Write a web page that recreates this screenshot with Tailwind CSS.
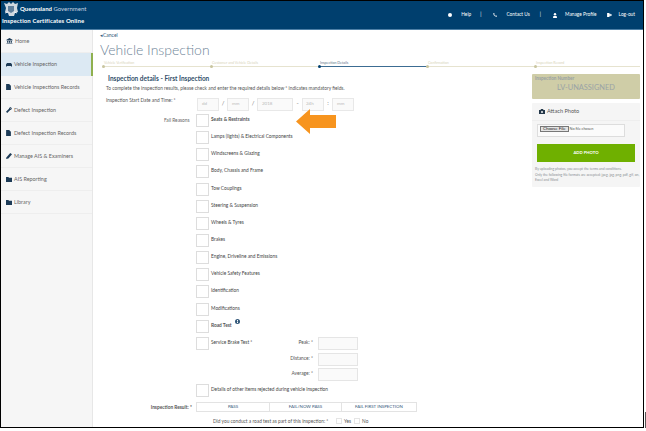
<!DOCTYPE html>
<html><head><meta charset="utf-8"><script src="https://cdn.jsdelivr.net/npm/@tailwindcss/browser@4"></script></head>
<body class="bg-white">
<div class="w-[646px] h-[431px] overflow-hidden relative font-['Lato','sans-serif'] text-[#555]">
 <div class="w-[644px] h-[428px] border-t border-l border-r border-b border-black flex flex-col overflow-hidden">
  <header class="h-[29px] shrink-0 bg-[#003f6e] border-b border-[#4d7fa6] flex items-stretch justify-between text-white pl-[1px] pr-[8px]">
   <div class="flex flex-col pt-[2px]">
    <div class="flex items-center gap-[2px] h-[12px] pl-[2px]">
     <svg width="14" height="14" viewBox="0 0 14 14"><path d="M0 1l3 1 2-2 2 2 2-2 2 2 3-1-1 5 1 4-3 1-1 3H5l-1-3-3-1 1-4z" fill="#cfd8e0"/><path d="M4 4h6v5l-3 2-3-2z" fill="#5f7f9c"/><path d="M1 11l3-1M13 11l-3-1" stroke="#fff" stroke-width=".8"/></svg>
     <span class="text-[6px] font-bold leading-none">Queensland <span class="font-normal text-[#c9d6e2]">Government</span></span>
    </div>
    <span class="text-[6px] font-bold leading-[6px] tracking-[0.1px] mt-[3px]">Inspection Certificates Online</span>
   </div>
   <nav class="flex items-center text-[4.8px] h-full">
    <svg class="w-[4px] h-[4px] mr-[9px]" viewBox="0 0 10 10"><circle cx="5" cy="5" r="5" fill="#fff"/></svg><span class="mr-[9px]">Help</span><span class="mr-[12px]">|</span>
    <svg class="w-[4px] h-[4px] mr-[9px]" viewBox="0 0 10 10"><path d="M1 0l2 0 1 3-1 1c1 2 2 3 3 3l1-1 3 1v2c-6 1-10-4-9-9z" fill="#fff"/></svg><span class="mr-[10px]">Contact Us</span><span class="mr-[12px]">|</span>
    <svg class="w-[4px] h-[5px] mr-[8px]" viewBox="0 0 10 12"><circle cx="5" cy="3" r="3" fill="#fff"/><path d="M0 12l1-5h8l1 5z" fill="#fff"/></svg><span class="mr-[10px]">Manage Profile</span>
    <svg class="w-[5px] h-[4px] mr-[7px]" viewBox="0 0 12 10"><path d="M0 0h6v10H0zM6 3h3V1l3 4-3 4V7H6z" fill="#fff"/></svg><span>Log-out</span>
   </nav>
  </header>
  <div class="flex flex-1 min-h-0">
   <aside class="w-[92px] shrink-0 bg-[#f6f6f6] border-r border-[#e7e7e7] text-[5.4px] text-[#666]">
    <div class="h-[23px] flex items-center pl-[5px] gap-[2px] border-b border-[#eee]"><svg class="w-[7px] h-[6px]" viewBox="0 0 10 10"><path d="M0 3l5-3 5 3v1H0zM1 5h2v3H1zM4 5h2v3H4zM7 5h2v3H7zM0 9h10v1H0z" fill="#1d3b57"/></svg>Home</div>
    <div class="h-[23px] flex items-center pl-[5px] gap-[2px] bg-[#dce9f3] border-r-[2px] border-[#8fb04f] mr-[-1px]"><svg class="w-[6px] h-[5px]" viewBox="0 0 12 8"><path d="M0 4l2-3h8l2 3v4h-2V7H2v1H0z" fill="#1d3b57"/></svg>Vehicle Inspection</div>
    <div class="h-[23px] flex items-center pl-[5px] gap-[3px] border-b border-[#eee]"><svg class="w-[5px] h-[6px]" viewBox="0 0 8 10"><path d="M0 0h5l3 3v7H0z" fill="#1d3b57"/></svg>Vehicle Inspections Records</div>
    <div class="h-[23px] flex items-center pl-[5px] gap-[2px] border-b border-[#eee]"><svg class="w-[6px] h-[6px]" viewBox="0 0 10 10"><path d="M0 8l5-5c0-2 2-3 4-3L7 2l1 1 2-2c0 2-1 4-3 4l-5 5z" fill="#1d3b57"/></svg>Defect Inspection</div>
    <div class="h-[23px] flex items-center pl-[5px] gap-[3px] border-b border-[#eee]"><svg class="w-[5px] h-[6px]" viewBox="0 0 8 10"><path d="M0 0h5l3 3v7H0z" fill="#1d3b57"/></svg>Defect Inspection Records</div>
    <div class="h-[23px] flex items-center pl-[5px] gap-[2px] border-b border-[#eee]"><svg class="w-[6px] h-[6px]" viewBox="0 0 10 10"><path d="M0 10l1-3 6-7 3 2-6 7z" fill="#1d3b57"/></svg>Manage AIS &amp; Examiners</div>
    <div class="h-[23px] flex items-center pl-[5px] gap-[2px] border-b border-[#eee]"><svg class="w-[6px] h-[5px]" viewBox="0 0 10 8"><path d="M0 0h4l1 1h5v7H0z" fill="#1d3b57"/></svg>AIS Reporting</div>
    <div class="h-[23px] flex items-center pl-[5px] gap-[2px] border-b border-[#eee]"><svg class="w-[6px] h-[5px]" viewBox="0 0 10 8"><path d="M0 0h4l1 1h5v7H0z" fill="#1d3b57"/></svg>Library</div>
   </aside>
   <main class="flex-1 min-w-0 pl-[7px] relative">
    <div class="text-[5px] text-[#33587a] leading-[5px] mt-[3px]">◂Cancel</div>
    <h1 class="text-[14px] leading-[20px] font-light text-[#6f8598] mt-[2px]">Vehicle Inspection</h1>
    <div class="relative h-[11px] mr-[3px] grid grid-cols-[108px_108px_108px_108px_1fr] text-[3.6px] text-[#d8d4ba] ml-[3px]">
     <div class="relative"><span class="absolute left-[1px] top-0">Vehicle Verification</span><div class="absolute left-0 right-0 top-[6px] h-[1px] bg-[#e6e3cf]"></div><div class="absolute left-[-1px] top-[5px] w-[3px] h-[3px] rounded-full bg-[#c9c59f]"></div></div>
     <div class="relative"><span class="absolute left-[1px] top-0">Customer and Vehicle Details</span><div class="absolute left-0 right-0 top-[6px] h-[1px] bg-[#e6e3cf]"></div><div class="absolute left-[-1px] top-[5px] w-[3px] h-[3px] rounded-full bg-[#c9c59f]"></div></div>
     <div class="relative text-[#5d7489]"><span class="absolute left-[1px] top-0">Inspection Details</span><div class="absolute left-0 right-0 top-[6px] h-[1px] bg-[#3c6c92]"></div><div class="absolute left-[-1px] top-[5px] w-[3px] h-[3px] rounded-full bg-[#003f6e]"></div></div>
     <div class="relative"><span class="absolute left-[1px] top-0">Confirmation</span><div class="absolute left-0 right-0 top-[6px] h-[1px] bg-[#e6e3cf]"></div><div class="absolute left-[-1px] top-[5px] w-[3px] h-[3px] rounded-full bg-[#c9c59f]"></div></div>
     <div class="relative"><span class="absolute left-[1px] top-0">Inspection Record</span><div class="absolute left-0 right-0 top-[6px] h-[1px] bg-[#e6e3cf]"></div><div class="absolute left-[-1px] top-[5px] w-[3px] h-[3px] rounded-full bg-[#c9c59f]"></div></div>
    </div>
    <div class="flex">
     <section class="w-[432px] shrink-0">
      <h2 class="text-[6.5px] leading-[9px] font-bold text-[#33506b] ml-[8px] mt-[3px]">Inspection details - First Inspection</h2>
      <p class="text-[4.8px] leading-[6px] mt-[2px] ml-[6px] text-[#555] whitespace-nowrap">To complete the inspection results, please check and enter the required details below * indicates mandatory fields.</p>
      <div class="flex mt-[7px] ml-[6px] text-[4.8px] h-[16px]">
       <span class="w-[91px] shrink-0 leading-[5px] text-[#555]">Inspection Start Date and Time: *</span>
       <div class="flex items-start text-[#bbb] text-[4.5px]">
        <span class="w-[22px] h-[13px] border border-[#e8e8e8] bg-[#fafafa] flex items-center pl-[4px]">dd</span><span class="w-[8px] text-center text-[#777] text-[6px] leading-[10px]">/</span>
        <span class="w-[22px] h-[13px] border border-[#e8e8e8] bg-[#fafafa] flex items-center pl-[4px]">mm</span><span class="w-[8px] text-center text-[#777] text-[6px] leading-[10px]">/</span>
        <span class="w-[36px] h-[13px] border border-[#e8e8e8] bg-[#fafafa] flex items-center pl-[4px]">2018</span><span class="w-[9px] text-center text-[#777] text-[6px] leading-[10px]">-</span>
        <span class="w-[22px] h-[13px] border border-[#e8e8e8] bg-[#fafafa] flex items-center pl-[3px]">24h</span><span class="w-[8px] text-center text-[#777] text-[6px] leading-[10px]">:</span>
        <span class="w-[22px] h-[13px] border border-[#e8e8e8] bg-[#fafafa] flex items-center pl-[4px]">mm</span>
       </div>
      </div>
      <div class="flex text-[4.8px] text-[#444]">
       <span class="w-[90px] pl-[58px] shrink-0 leading-[12px] text-[#666] ml-[6px] whitespace-nowrap">Fail Reasons</span>
       <div class="flex flex-col">
        <div class="h-[17.15px] flex gap-[2px]"><i class="block w-[13px] h-[13px] border border-[#ddd]"></i><span class="font-bold leading-[11px] text-[#555]">Seats &amp; Restraints</span></div>
        <div class="h-[17.15px] flex gap-[2px]"><i class="block w-[13px] h-[13px] border border-[#ddd]"></i><span class="leading-[11px]">Lamps (lights) &amp; Electrical Components</span></div>
        <div class="h-[17.15px] flex gap-[2px]"><i class="block w-[13px] h-[13px] border border-[#ddd]"></i><span class="leading-[11px]">Windscreens &amp; Glazing</span></div>
        <div class="h-[17.15px] flex gap-[2px]"><i class="block w-[13px] h-[13px] border border-[#ddd]"></i><span class="leading-[11px]">Body, Chassis and Frame</span></div>
        <div class="h-[17.15px] flex gap-[2px]"><i class="block w-[13px] h-[13px] border border-[#ddd]"></i><span class="leading-[11px]">Tow Couplings</span></div>
        <div class="h-[17.15px] flex gap-[2px]"><i class="block w-[13px] h-[13px] border border-[#ddd]"></i><span class="leading-[11px]">Steering &amp; Suspension</span></div>
        <div class="h-[17.15px] flex gap-[2px]"><i class="block w-[13px] h-[13px] border border-[#ddd]"></i><span class="leading-[11px]">Wheels &amp; Tyres</span></div>
        <div class="h-[17.15px] flex gap-[2px]"><i class="block w-[13px] h-[13px] border border-[#ddd]"></i><span class="leading-[11px]">Brakes</span></div>
        <div class="h-[17.15px] flex gap-[2px]"><i class="block w-[13px] h-[13px] border border-[#ddd]"></i><span class="leading-[11px]">Engine, Driveline and Emissions</span></div>
        <div class="h-[17.15px] flex gap-[2px]"><i class="block w-[13px] h-[13px] border border-[#ddd]"></i><span class="leading-[11px]">Vehicle Safety Features</span></div>
        <div class="h-[17.15px] flex gap-[2px]"><i class="block w-[13px] h-[13px] border border-[#ddd]"></i><span class="leading-[11px]">Identification</span></div>
        <div class="h-[17.15px] flex gap-[2px]"><i class="block w-[13px] h-[13px] border border-[#ddd]"></i><span class="leading-[11px]">Modifications</span></div>
        <div class="h-[17.15px] flex gap-[2px]"><i class="block w-[13px] h-[13px] border border-[#ddd]"></i><span class="leading-[11px] font-bold text-[#555]">Road Test</span><svg class="w-[5px] h-[5px] ml-[1px] mt-[-1px]" viewBox="0 0 10 10"><circle cx="5" cy="5" r="5" fill="#33587a"/><path d="M4 2h2v2H4zM4 5h2v3H4z" fill="#fff"/></svg></div>
        <div class="flex gap-[2px] h-[47px]">
         <i class="block w-[13px] h-[13px] border border-[#ddd]"></i>
         <span class="leading-[11px] w-[70px]">Service Brake Test *</span>
         <div class="flex flex-col text-[#555]">
          <div class="flex h-[15px] gap-[5px] justify-end"><span class="w-[30px] text-right leading-[11px]">Peak: *</span><i class="block w-[40px] h-[13px] border border-[#e5e5e5] bg-[#fafafa]"></i></div>
          <div class="flex h-[15px] gap-[5px] justify-end mt-[1px]"><span class="w-[30px] text-right leading-[11px]">Distance: *</span><i class="block w-[40px] h-[13px] border border-[#e5e5e5] bg-[#fafafa]"></i></div>
          <div class="flex h-[15px] gap-[5px] justify-end"><span class="w-[30px] text-right leading-[11px]">Average: *</span><i class="block w-[40px] h-[13px] border border-[#e5e5e5] bg-[#fafafa]"></i></div>
         </div>
        </div>
        <div class="h-[17px] flex gap-[2px]"><i class="block w-[13px] h-[13px] border border-[#ddd]"></i><span class="leading-[11px]">Details of other items rejected during vehicle inspection</span></div>
       </div>
      </div>
      <div class="flex text-[4.8px] mt-[1px]">
       <span class="w-[96px] shrink-0 text-right pr-[4px] leading-[10px] font-bold">Inspection Result: *</span>
       <div class="flex w-[221px] h-[10px] border border-[#e3e3e3] text-[4.4px] text-[#33587a] leading-[8px] text-center">
        <span class="w-[73px] border-r border-[#e3e3e3]">PASS</span><span class="w-[72px] border-r border-[#e3e3e3]">FAIL/NOW PASS</span><span class="flex-1">FAIL FIRST INSPECTION</span>
       </div>
      </div>
      <div class="flex items-center text-[4.8px] mt-[5px] ml-[113px] h-[9px]">
       <span class="w-[114px] shrink-0 whitespace-nowrap">Did you conduct a road test as part of this inspection: *</span>
       <i class="block w-[6px] h-[6px] border border-[#e5e5e5] ml-[9px]"></i><span class="ml-[2px]">Yes</span>
       <i class="block w-[6px] h-[6px] border border-[#e5e5e5] ml-[3px]"></i><span class="ml-[2px]">No</span>
      </div>
     </section>
     <aside class="w-[108px] shrink-0 mt-[3px]">
      <div class="h-[25px] bg-[#cfcda7] rounded-[1px] text-[#97a0a3] px-[3px] pt-[2px]">
       <div class="text-[4.6px] font-bold leading-[5px]">Inspection Number</div>
       <div class="text-[7.4px] text-center leading-[13px] text-[#9aa3a6]">LV-UNASSIGNED</div>
      </div>
      <div class="mt-[4px] bg-[#f5f5f5] rounded-[1px] h-[84px]">
       <div class="h-[18px] flex items-center pl-[7px] gap-[2px] text-[5.6px] text-[#555] border-b border-[#eee]"><svg class="w-[6px] h-[5px]" viewBox="0 0 12 10"><path d="M0 2h3l1-2h4l1 2h3v8H0z" fill="#24384a"/><circle cx="6" cy="6" r="2" fill="#f5f5f5"/></svg>Attach Photo</div>
       <div class="ml-[5px] w-[88px] mt-[3px] h-[13px] border border-[#ddd] bg-[#fbfbfb] text-[3.8px] flex items-start pt-[1px] pl-[2px] gap-[1px]"><span class="border border-[#777] bg-[#e4e4e4] text-[#222] px-[2px] leading-[4px] h-[6px] text-[4.4px] whitespace-nowrap">Choose File</span><span class="leading-[6px] whitespace-nowrap">No file chosen</span></div>
       <div class="ml-[5px] w-[98px] mt-[7px] h-[18px] bg-[#6fb000] text-white text-[4.2px] font-bold flex items-center justify-center">ADD PHOTO</div>
       <p class="text-[3.4px] leading-[5.6px] text-[#8a8f94] ml-[3px] mt-[5px] whitespace-nowrap">By uploading photos, you accept the terms and conditions.<br>Only the following file formats are accepted: jpeg, jpg, png, pdf, gif, on,<br>Excel and Word</p>
      </div>
     </aside>
    </div>
    <svg class="absolute left-[203px] top-[79px]" width="40" height="25" viewBox="0 0 40 25"><path d="M0 12.500 14 0v6h26v13H14v6z" fill="#f7941e"/></svg>
   </main>
  </div>
 </div>
 <div class="absolute left-[645px] top-[412px] w-[1px] h-[16px] bg-[#555]"></div>
</div>
</body></html>
